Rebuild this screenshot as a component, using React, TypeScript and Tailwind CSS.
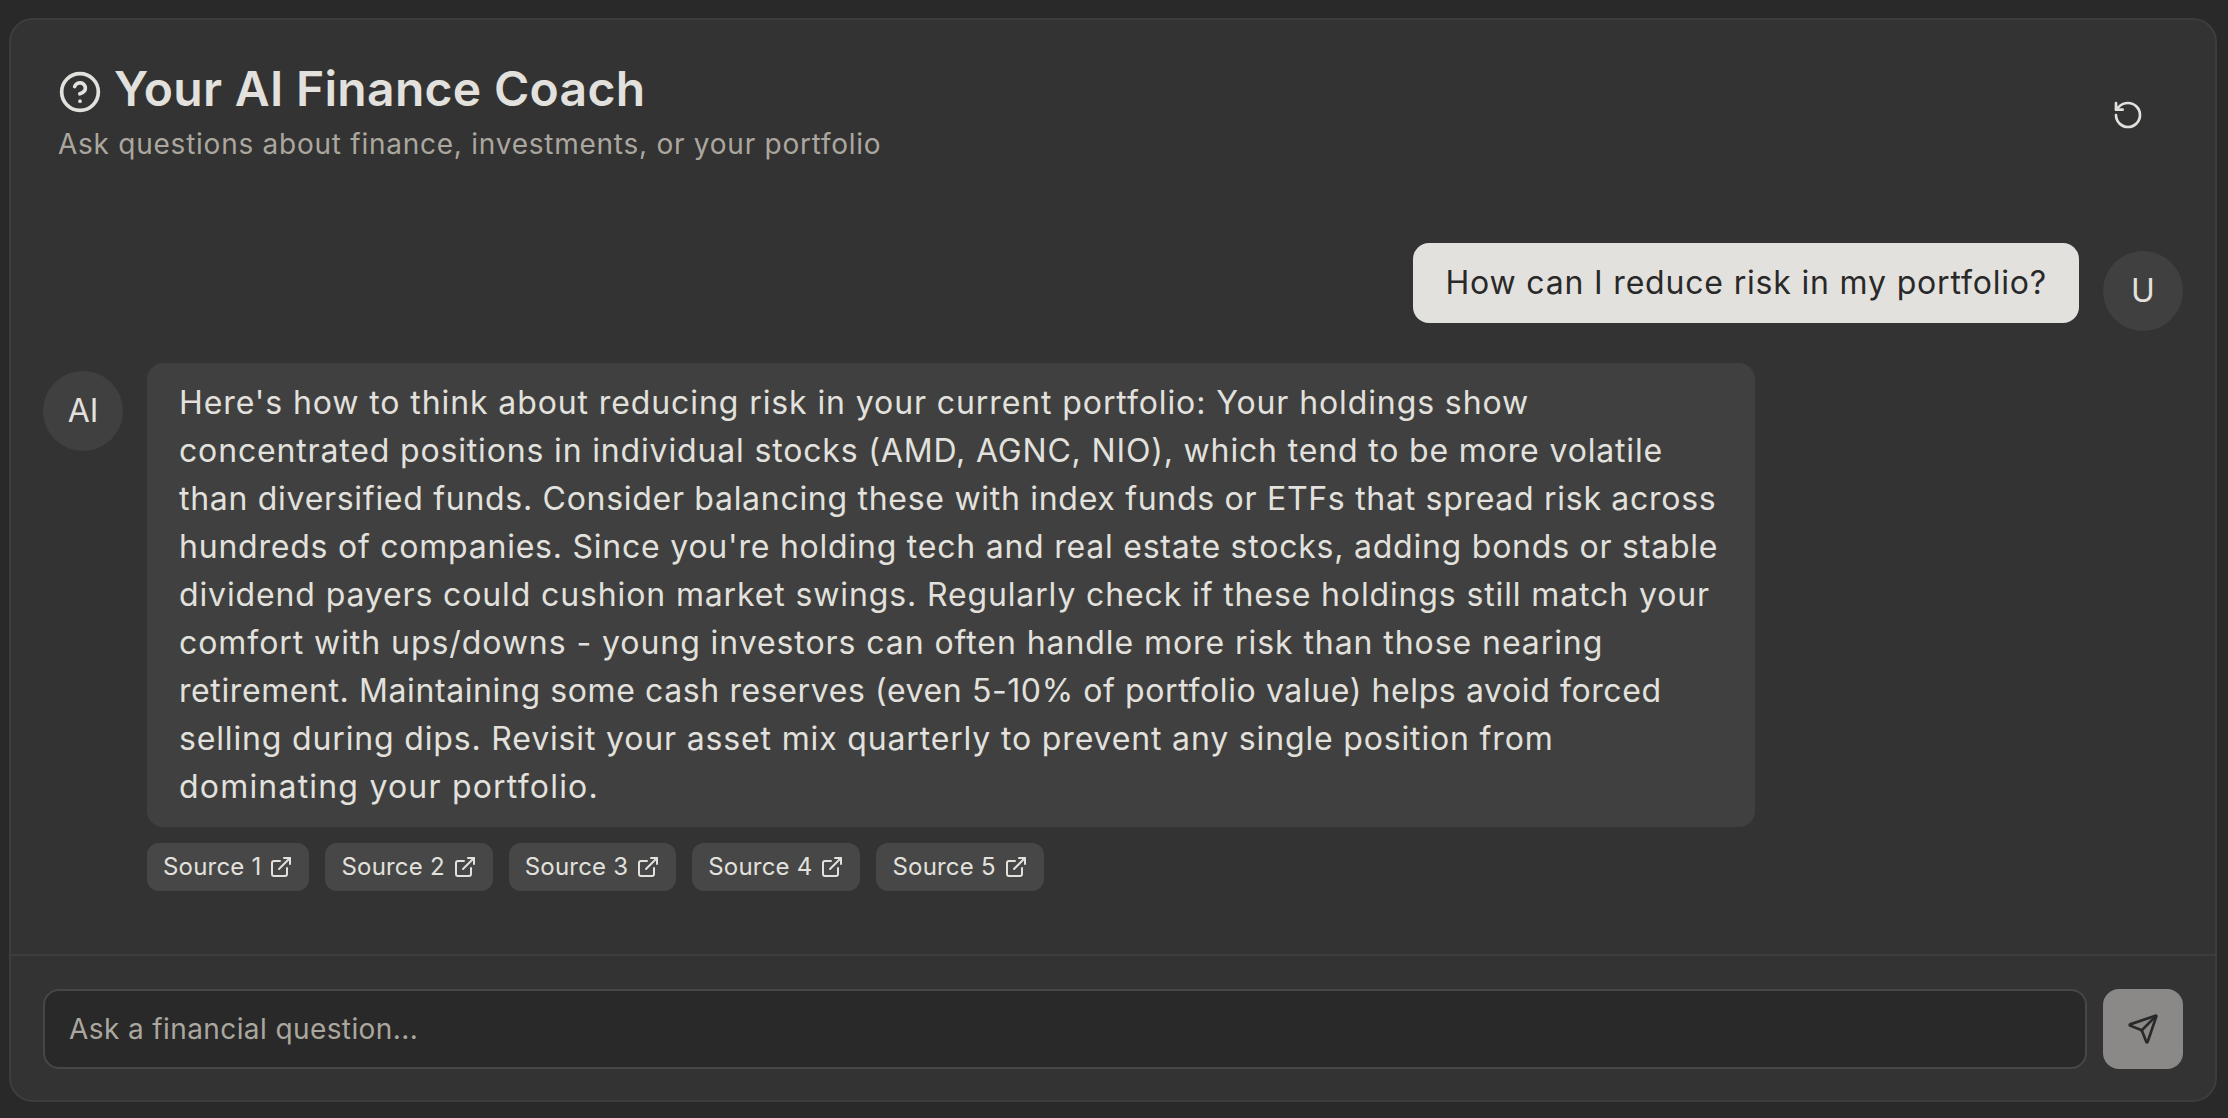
import { CircleHelp, ExternalLink, RotateCcw, Send } from "lucide-react";

const lines = [
  { text: "Here's how to think about reducing risk in your current portfolio: Your holdings show", cls: "tracking-[0.9px]" },
  { text: "concentrated positions in individual stocks (AMD, AGNC, NIO), which tend to be more volatile", cls: "tracking-[0.84px]" },
  { text: "than diversified funds. Consider balancing these with index funds or ETFs that spread risk across", cls: "tracking-[0.71px]" },
  { text: "hundreds of companies. Since you're holding tech and real estate stocks, adding bonds or stable", cls: "tracking-[0.77px]" },
  { text: "dividend payers could cushion market swings. Regularly check if these holdings still match your", cls: "tracking-[0.87px]" },
  { text: "comfort with ups/downs - young investors can often handle more risk than those nearing", cls: "tracking-[0.93px]" },
  { text: "retirement. Maintaining some cash reserves (even 5-10% of portfolio value) helps avoid forced", cls: "tracking-[0.6px]" },
  { text: "selling during dips. Revisit your asset mix quarterly to prevent any single position from", cls: "tracking-[0.84px]" },
  { text: "dominating your portfolio.", cls: "tracking-[1.2px]" },
];

const sources = ["Source 1", "Source 2", "Source 3", "Source 4", "Source 5"];

export default function App() {
  return (
    <div className="h-[1118px] w-[2228px] overflow-hidden bg-[#292929] pl-[9px] pr-[11px] pt-[18px] pb-[16px] font-['Inter','Liberation_Sans',sans-serif]">
      <div className="flex h-[1084px] flex-col rounded-[24px] border-2 border-[#3d3d3d] bg-[#333333]">
        <header className="flex h-[138px] shrink-0 items-start justify-between pl-[47px] pr-[46px] pt-[41px]">
          <div>
            <div className="flex items-center gap-[12px]">
              <CircleHelp className="mt-[5px] h-[44px] w-[44px] text-[#e2e1dd]" strokeWidth={2} />
              <h1 className="text-[48px] leading-[56px] font-semibold tracking-[0.3px] text-[#e2e1dd]">Your AI Finance Coach</h1>
            </div>
            <p className="mt-[9px] text-[28px] leading-[36px] tracking-[0.75px] text-[#aba79f]">Ask questions about finance, investments, or your portfolio</p>
          </div>
          <button className="mt-[30px] mr-[17px] flex h-[48px] w-[48px] items-center justify-center text-[#e2e1dd]">
            <RotateCcw className="h-[32px] w-[32px]" strokeWidth={2} />
          </button>
        </header>

        <main className="flex min-h-0 flex-1 flex-col gap-[32px] pl-[32px] pr-[32px] pt-[85px]">
          <div className="flex items-start justify-end gap-[24px]">
            <div className="rounded-[16px] bg-[#e2e1dd] px-[32px] py-[16px] text-[32px] leading-[48px] tracking-[0.82px] text-[#292929]">
              How can I reduce risk in my portfolio?
            </div>
            <div className="mt-[8px] flex h-[80px] w-[80px] items-center justify-center rounded-full bg-[#404040] text-[32px] text-[#e2e1dd]">U</div>
          </div>

          <div className="flex items-start gap-[24px]">
            <div className="mt-[8px] flex h-[80px] w-[80px] shrink-0 items-center justify-center rounded-full bg-[#404040] text-[32px] text-[#e2e1dd]">AI</div>
            <div>
              <div className="w-[1608px] rounded-[16px] bg-[#404040] px-[32px] py-[16px] text-[32px] leading-[48px] whitespace-nowrap text-[#e2e1dd]">
                {lines.map((l) => (
                  <div key={l.text} className={l.cls}>{l.text}</div>
                ))}
              </div>
              <div className="mt-[16px] flex gap-[16px]">
                {sources.map((s) => (
                  <a key={s} className="flex h-[48px] items-center gap-[8px] rounded-[12px] bg-[#474747] px-[16px] text-[24px] tracking-[0.2px] text-[#e2e1dd]">
                    {s}
                    <ExternalLink className="h-[24px] w-[24px]" strokeWidth={2} />
                  </a>
                ))}
              </div>
            </div>
          </div>
        </main>

        <footer className="flex shrink-0 items-center gap-[16px] border-t-2 border-[#3d3d3d] pl-[32px] pr-[32px] pt-[33px] pb-[31px]">
          <div className="flex h-[80px] flex-1 items-center rounded-[16px] border-2 border-[#474747] bg-[#292929] px-[24px] text-[28px] tracking-[0.4px] text-[#aba79f]">
            Ask a financial question...
          </div>
          <button className="flex h-[80px] w-[80px] items-center justify-center rounded-[16px] bg-[#8a8987] text-[#292929]">
            <Send className="h-[32px] w-[32px]" strokeWidth={2} />
          </button>
        </footer>
      </div>
    </div>
  );
}
